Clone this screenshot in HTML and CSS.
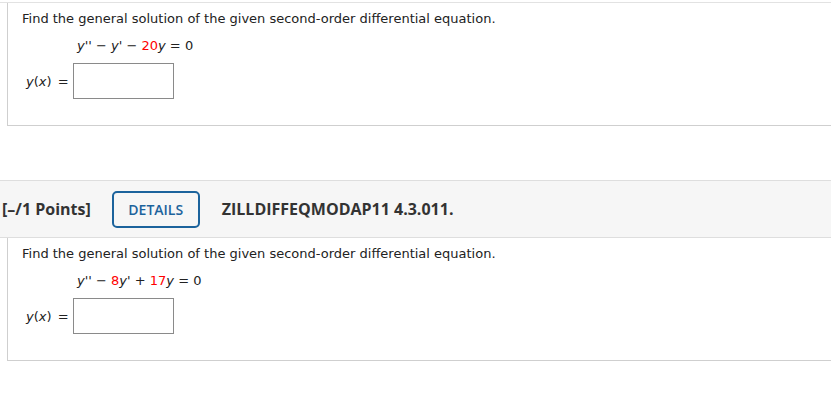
FILE: index.html
```html
<!DOCTYPE html>
<html>
<head>
<meta charset="utf-8">
<link rel="stylesheet" href="styles.css">
</head>
<body>
<div class="topline"></div>
<div class="qbox">
  <div class="prompt">Find the general solution of the given second-order differential equation.</div>
  <div class="eq"><i>y''</i> − <i>y'</i> − <span class="red">20</span><i>y</i> = 0</div>
  <div class="answer">
    <span class="label"><i>y</i>(<i>x</i>) =</span>
    <span class="inputbox"></span>
  </div>
</div>

<div class="header">
  <span class="points">[–/1 Points]</span>
  <span class="details">DETAILS</span>
  <span class="code">ZILLDIFFEQMODAP11 4.3.011.</span>
</div>
<div class="qbox second">
  <div class="prompt">Find the general solution of the given second-order differential equation.</div>
  <div class="eq"><i>y''</i> − <span class="red">8</span><i>y'</i> + <span class="red">17</span><i>y</i> = 0</div>
  <div class="answer">
    <span class="label"><i>y</i>(<i>x</i>) =</span>
    <span class="inputbox"></span>
  </div>
</div>
</body>
</html>
```

FILE: styles.css
```css
html, body {
  margin: 0;
  padding: 0;
  background: #fff;
}
body {
  font-family: "DejaVu Sans", Verdana, sans-serif;
  color: #222;
}
.topline {
  margin-top: 2px;
  height: 1px;
  background: #e2e2e2;
}
.qbox {
  margin-left: 7px;
  border-left: 1px solid #cfcfcf;
  border-bottom: 1px solid #cfcfcf;
  padding: 8px 0 26px 14px;
  font-size: 13px;
}
.prompt {
  line-height: 16px;
}
.eq {
  line-height: 16px;
  margin-top: 11px;
  padding-left: 55px;
}
.red {
  color: #f00;
}
.answer {
  display: flex;
  align-items: center;
  margin-top: 9px;
  padding-left: 4px;
}
.label {
  width: 47px;
  word-spacing: 2px;
}
.inputbox {
  display: block;
  width: 99px;
  height: 34px;
  border: 1px solid #8a8a8a;
  background: #fff;
}
.header {
  margin-top: 54px;
  height: 56px;
  background: #f6f6f6;
  border-top: 1px solid #dedede;
  border-bottom: 1px solid #dedede;
  display: flex;
  align-items: center;
  padding-left: 2px;
  font-family: "Open Sans", sans-serif;
  font-weight: 700;
  font-size: 16px;
  color: #333;
}
.details {
  margin-left: 21px;
  width: 84px;
  height: 33px;
  border: 2px solid #1c639c;
  border-radius: 5px;
  display: flex;
  align-items: center;
  justify-content: center;
  color: #1c639c;
  font-weight: 600;
  font-size: 14px;
}
.code {
  margin-left: 22px;
}
```
